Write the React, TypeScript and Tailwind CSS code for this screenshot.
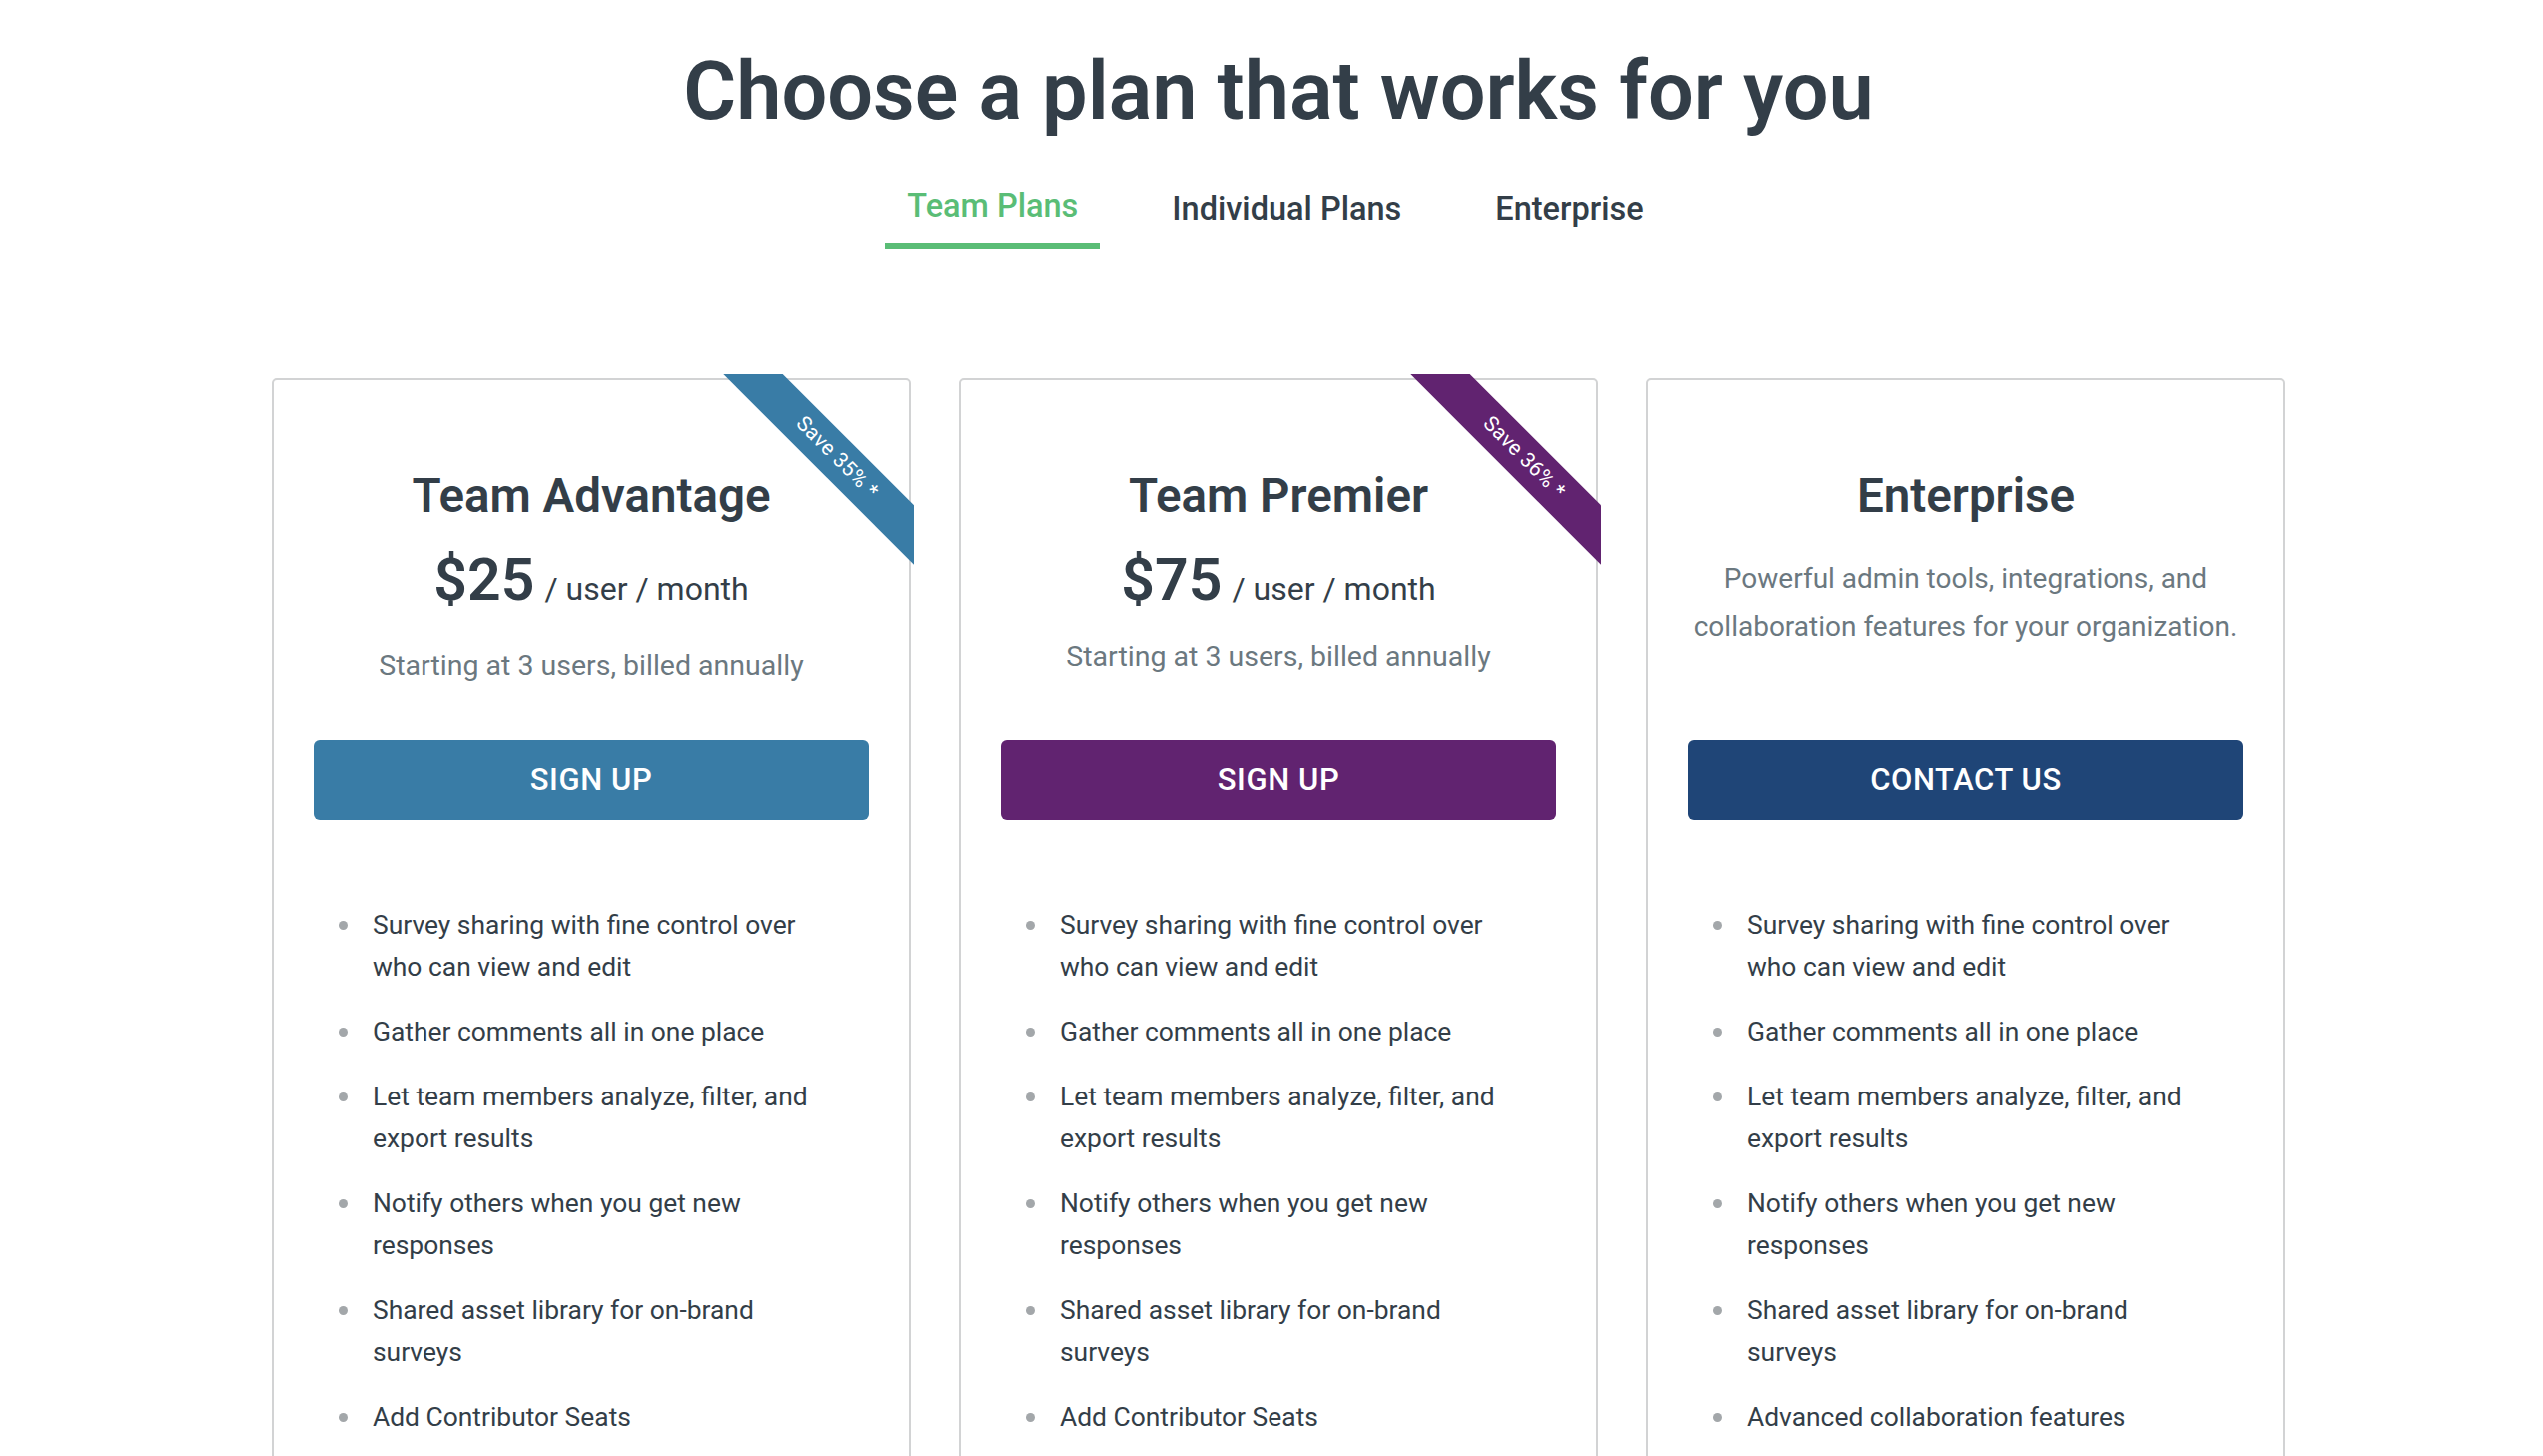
import React from 'react';

type Plan = {
  name: string;
  price?: string;
  sub?: string;
  subGap?: string;
  desc?: string[];
  cta: string;
  color: string;
  ribbon?: string;
  features: string[][];
};

const baseFeatures: string[][] = [
  ['Survey sharing with fine control over', 'who can view and edit'],
  ['Gather comments all in one place'],
  ['Let team members analyze, filter, and', 'export results'],
  ['Notify others when you get new', 'responses'],
  ['Shared asset library for on-brand', 'surveys'],
];

const plans: Plan[] = [
  {
    name: 'Team Advantage',
    price: '$25',
    sub: 'Starting at 3 users, billed annually',
    subGap: 'mt-[43px]',
    cta: 'SIGN UP',
    color: 'bg-[#397ca6]',
    ribbon: 'Save 35% *',
    features: [...baseFeatures, ['Add Contributor Seats']],
  },
  {
    name: 'Team Premier',
    price: '$75',
    sub: 'Starting at 3 users, billed annually',
    subGap: 'mt-[34px]',
    cta: 'SIGN UP',
    color: 'bg-[#612370]',
    ribbon: 'Save 36% *',
    features: [...baseFeatures, ['Add Contributor Seats']],
  },
  {
    name: 'Enterprise',
    desc: ['Powerful admin tools, integrations, and', 'collaboration features for your organization.'],
    cta: 'CONTACT US',
    color: 'bg-[#1f4577]',
    features: [...baseFeatures, ['Advanced collaboration features']],
  },
];

function Ribbon({ label, color }: { label: string; color: string }) {
  return (
    <div className="absolute top-[-6px] right-[-5px] w-[191px] h-[191px] overflow-hidden pointer-events-none">
      <div
        className={`absolute left-[-49px] top-[60px] w-[320px] h-[42px] rotate-45 flex items-center justify-center ${color}`}
      >
        <span className="text-white text-[21px] tracking-[0.3px] pl-[8px]">{label}</span>
      </div>
    </div>
  );
}

function PlanCard({ plan }: { plan: Plan }) {
  return (
    <div className="relative w-[640px] border-2 border-[#d2d3d4] rounded-[5px] bg-white px-10 pb-[70px]">
      {plan.ribbon && <Ribbon label={plan.ribbon} color={plan.color} />}

      <div className="h-[360px] pt-[93px] flex flex-col items-center text-center">
        <h2 className="text-[47.5px] leading-none font-semibold text-[#333e48]">{plan.name}</h2>

        {plan.price ? (
          <>
            <div className="mt-[29px] flex items-baseline text-[#333e48]">
              <span className="text-[59px] leading-none font-semibold">{plan.price}</span>
              <span className="ml-[10px] text-[32px] leading-none">/ user / month</span>
            </div>
            <p className={`${plan.subGap} text-[28.5px] leading-none text-[#6b787f]`}>{plan.sub}</p>
          </>
        ) : (
          <div className="mt-[34px] text-[28px] leading-[48px] text-[#6b787f]">
            {plan.desc?.map((l) => (
              <div key={l} className="whitespace-nowrap">
                {l}
              </div>
            ))}
          </div>
        )}
      </div>

      <button
        className={`w-full h-[80px] rounded-[6px] ${plan.color} text-white text-[31px] font-medium tracking-[0.6px] flex items-center justify-center`}
      >
        {plan.cta}
      </button>

      <ul className="mt-[84px] flex flex-col gap-[23px]">
        {plan.features.map((f) => (
          <li key={f.join(' ')} className="flex">
            <span className="ml-[25px] mt-[17px] w-[9px] h-[9px] rounded-full bg-[#a3a7aa] shrink-0" />
            <div className="ml-[25px] text-[26.4px] leading-[42px] text-[#333e48]">
              {f.map((line) => (
                <div key={line} className="whitespace-nowrap">
                  {line}
                </div>
              ))}
            </div>
          </li>
        ))}
      </ul>
    </div>
  );
}

export default function App() {
  const tabs = ['Team Plans', 'Individual Plans', 'Enterprise'];
  return (
    <div className="min-h-screen bg-white overflow-hidden" style={{ fontFamily: 'Roboto, "Noto Sans", sans-serif' }}>
      <div className="w-[2016px] ml-[272px]">
        <h1 className="pt-[51px] text-center text-[81px] leading-none font-semibold text-[#333e48]">
          Choose a plan that works for you
        </h1>

        <div className="mt-[59px] flex justify-center gap-[50px] pr-[6px]">
          {tabs.map((t, i) =>
            i === 0 ? (
              <div
                key={t}
                className="px-[22px] pb-[22px] border-b-[6px] border-[#5abd76] text-[32.5px] leading-[30px] font-medium text-[#5abd76]"
              >
                {t}
              </div>
            ) : (
              <div
                key={t}
                className="px-[22px] pt-[3px] pb-[19px] border-b-[6px] border-transparent text-[32.5px] leading-[30px] font-medium text-[#333e48]"
              >
                {t}
              </div>
            )
          )}
        </div>

        <div className="mt-[130px] flex gap-[48px]">
          {plans.map((p) => (
            <PlanCard key={p.name} plan={p} />
          ))}
        </div>
      </div>
    </div>
  );
}
